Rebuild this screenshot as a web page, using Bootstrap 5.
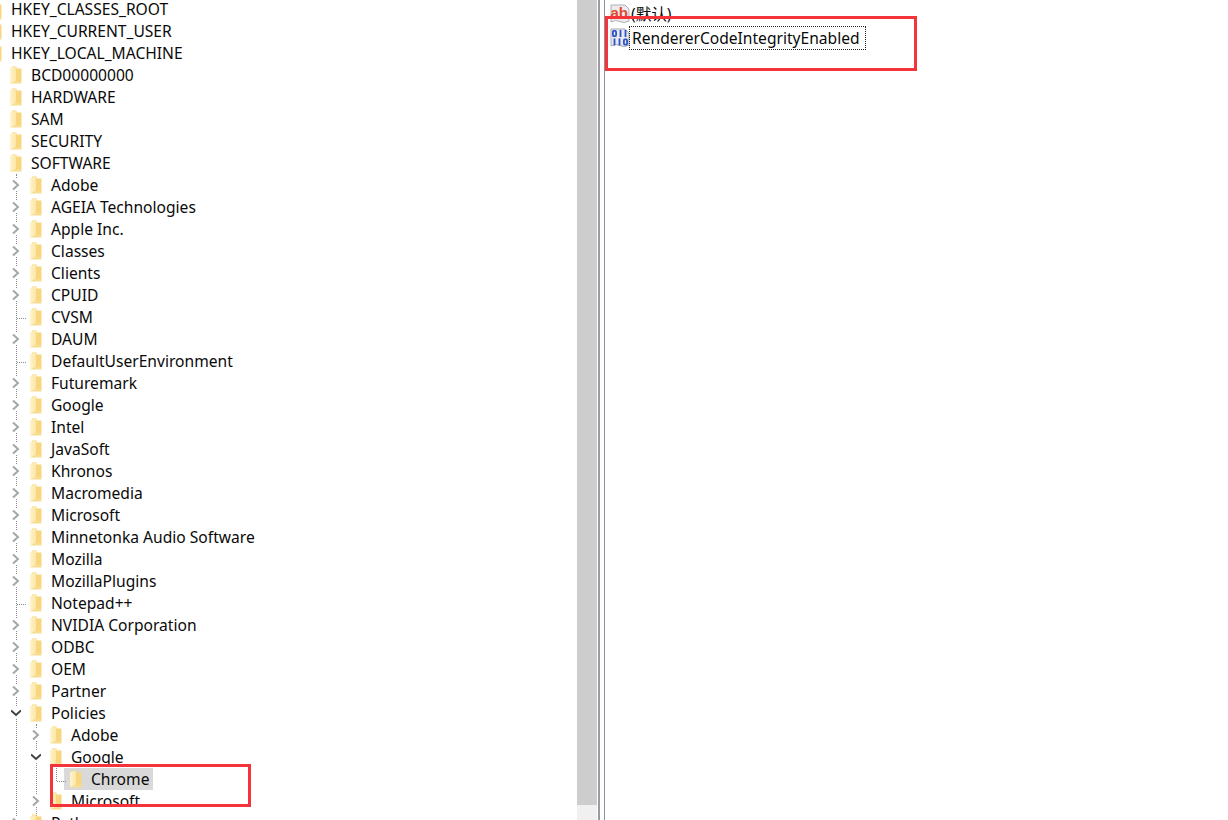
<!DOCTYPE html>
<html lang="zh">
<head>
<meta charset="utf-8">
<title>Registry</title>
<link href="https://cdn.jsdelivr.net/npm/bootstrap@5.3.0/dist/css/bootstrap.min.css" rel="stylesheet">
<style>
html,body{height:820px;overflow:hidden;background:#fff;}
body{font-family:"Noto Sans","Noto Sans CJK SC",sans-serif;font-size:15.6px;color:#0a0a0a;}
.shell{width:1228px;height:820px;position:relative;overflow:hidden;}
.tree-pane{width:577px;height:820px;position:relative;overflow:hidden;flex:none;}
.trow{height:22px;line-height:22px;white-space:nowrap;}
.trow-top{height:20px;line-height:18px;}
.lv0{margin-left:-31px;}
.lv1{margin-left:-11px;}
.lv2{margin-left:9px;}
.lv3{margin-left:29px;}
.lv4{margin-left:49px;}
.twist{width:10px;height:22px;margin-left:2px;margin-right:8px;flex:none;position:relative;z-index:1;}
.twist svg{display:block;margin-top:5px;background:#fff;}
.nub{width:20px;flex:none;}
.fold{width:13px;height:18px;flex:none;margin-right:9px;margin-top:2px;position:relative;z-index:1;}
.lbl{display:inline-block;}
.sel-box{background:#d9d9d9;margin-left:-5px;padding-left:5px;padding-right:4px;}
.vline{position:absolute;border-left:1px dotted #8a8a8a;width:0;}
.hline{position:absolute;border-top:1px dotted #8a8a8a;height:0;}
.sbar{width:20px;height:820px;background:#f0f0f0;flex:none;}
.sthumb{height:805px;background:#cdcdcd;}
.gapa{width:1px;flex:none;}
.split1{width:2px;height:820px;background:#9a9aa2;flex:none;}
.gapb{width:4px;flex:none;}
.split2{width:1px;height:820px;background:#8f8f96;flex:none;}
.val-pane{padding:2px 0 0 5px;}
.vrow{height:24px;line-height:24px;white-space:nowrap;}
.vicon{width:20px;height:20px;flex:none;margin-right:1px;}
.focusbox{outline:1px dotted #222;padding:0 5px 0 2px;height:22px;line-height:22px;margin-left:-1px;}
.redbox{position:absolute;border:3px solid #f5333a;z-index:3;}
.red-a{left:50px;top:764px;width:201px;height:43px;}
.red-b{left:605px;top:16px;width:312px;height:55px;}
</style>
</head>
<body>
<svg width="0" height="0" class="position-absolute">
<defs>
<linearGradient id="fg" x1="0" y1="0" x2="1" y2="0"><stop offset="0" stop-color="#fff4cc"/><stop offset="1" stop-color="#fce6a6"/></linearGradient>
<symbol id="folder" viewBox="0 0 13 18">
<path d="M3 0.500H7.500V2.500H12.500V15H3Z" fill="#f8d67e"/>
<path d="M1 2L7 0.500V14.500L1 17.500Z" fill="url(#fg)"/>
<path d="M7 14.500L1 17.500H12.500V15H7Z" fill="#f8dc90"/>
</symbol>
<symbol id="cr" viewBox="0 0 10 12"><path d="M2 1.500L7 6L2 10.500" fill="none" stroke="#a6a6a6" stroke-width="2"/></symbol>
<symbol id="cd" viewBox="0 0 10 12"><path d="M0 3.500L5 8L10 3.500" fill="none" stroke="#404040" stroke-width="2"/></symbol>
</defs>
</svg>
<div class="shell d-flex">
  <div class="tree-pane">
    <div class="vline" style="left:16px;top:174px;height:650px"></div>
    <div class="vline" style="left:36px;top:724px;height:100px"></div>
    <div class="hline" style="left:17px;top:318px;width:9px"></div>
    <div class="hline" style="left:17px;top:362px;width:9px"></div>
    <div class="hline" style="left:17px;top:604px;width:9px"></div>
    <div class="vline" style="left:56px;top:768px;height:13px"></div>
    <div class="hline" style="left:57px;top:781px;width:9px"></div>
    <div>
      <div class="trow trow-top lv0 d-flex"><span class="nub"></span><svg class="fold"><use href="#folder"/></svg><span class="lbl">HKEY_CLASSES_ROOT</span></div>
      <div class="trow lv0 d-flex"><span class="nub"></span><svg class="fold"><use href="#folder"/></svg><span class="lbl">HKEY_CURRENT_USER</span></div>
      <div class="trow lv0 d-flex"><span class="nub"></span><svg class="fold"><use href="#folder"/></svg><span class="lbl">HKEY_LOCAL_MACHINE</span></div>
      <div class="trow lv1 d-flex"><span class="nub"></span><svg class="fold"><use href="#folder"/></svg><span class="lbl">BCD00000000</span></div>
      <div class="trow lv1 d-flex"><span class="nub"></span><svg class="fold"><use href="#folder"/></svg><span class="lbl">HARDWARE</span></div>
      <div class="trow lv1 d-flex"><span class="nub"></span><svg class="fold"><use href="#folder"/></svg><span class="lbl">SAM</span></div>
      <div class="trow lv1 d-flex"><span class="nub"></span><svg class="fold"><use href="#folder"/></svg><span class="lbl">SECURITY</span></div>
      <div class="trow lv1 d-flex"><span class="nub"></span><svg class="fold"><use href="#folder"/></svg><span class="lbl">SOFTWARE</span></div>
      <div class="trow lv2 d-flex"><span class="twist"><svg width="10" height="12"><use href="#cr"/></svg></span><svg class="fold"><use href="#folder"/></svg><span class="lbl">Adobe</span></div>
      <div class="trow lv2 d-flex"><span class="twist"><svg width="10" height="12"><use href="#cr"/></svg></span><svg class="fold"><use href="#folder"/></svg><span class="lbl">AGEIA Technologies</span></div>
      <div class="trow lv2 d-flex"><span class="twist"><svg width="10" height="12"><use href="#cr"/></svg></span><svg class="fold"><use href="#folder"/></svg><span class="lbl">Apple Inc.</span></div>
      <div class="trow lv2 d-flex"><span class="twist"><svg width="10" height="12"><use href="#cr"/></svg></span><svg class="fold"><use href="#folder"/></svg><span class="lbl">Classes</span></div>
      <div class="trow lv2 d-flex"><span class="twist"><svg width="10" height="12"><use href="#cr"/></svg></span><svg class="fold"><use href="#folder"/></svg><span class="lbl">Clients</span></div>
      <div class="trow lv2 d-flex"><span class="twist"><svg width="10" height="12"><use href="#cr"/></svg></span><svg class="fold"><use href="#folder"/></svg><span class="lbl">CPUID</span></div>
      <div class="trow lv2 d-flex"><span class="nub"></span><svg class="fold"><use href="#folder"/></svg><span class="lbl">CVSM</span></div>
      <div class="trow lv2 d-flex"><span class="twist"><svg width="10" height="12"><use href="#cr"/></svg></span><svg class="fold"><use href="#folder"/></svg><span class="lbl">DAUM</span></div>
      <div class="trow lv2 d-flex"><span class="nub"></span><svg class="fold"><use href="#folder"/></svg><span class="lbl">DefaultUserEnvironment</span></div>
      <div class="trow lv2 d-flex"><span class="twist"><svg width="10" height="12"><use href="#cr"/></svg></span><svg class="fold"><use href="#folder"/></svg><span class="lbl">Futuremark</span></div>
      <div class="trow lv2 d-flex"><span class="twist"><svg width="10" height="12"><use href="#cr"/></svg></span><svg class="fold"><use href="#folder"/></svg><span class="lbl">Google</span></div>
      <div class="trow lv2 d-flex"><span class="twist"><svg width="10" height="12"><use href="#cr"/></svg></span><svg class="fold"><use href="#folder"/></svg><span class="lbl">Intel</span></div>
      <div class="trow lv2 d-flex"><span class="twist"><svg width="10" height="12"><use href="#cr"/></svg></span><svg class="fold"><use href="#folder"/></svg><span class="lbl">JavaSoft</span></div>
      <div class="trow lv2 d-flex"><span class="twist"><svg width="10" height="12"><use href="#cr"/></svg></span><svg class="fold"><use href="#folder"/></svg><span class="lbl">Khronos</span></div>
      <div class="trow lv2 d-flex"><span class="twist"><svg width="10" height="12"><use href="#cr"/></svg></span><svg class="fold"><use href="#folder"/></svg><span class="lbl">Macromedia</span></div>
      <div class="trow lv2 d-flex"><span class="twist"><svg width="10" height="12"><use href="#cr"/></svg></span><svg class="fold"><use href="#folder"/></svg><span class="lbl">Microsoft</span></div>
      <div class="trow lv2 d-flex"><span class="twist"><svg width="10" height="12"><use href="#cr"/></svg></span><svg class="fold"><use href="#folder"/></svg><span class="lbl">Minnetonka Audio Software</span></div>
      <div class="trow lv2 d-flex"><span class="twist"><svg width="10" height="12"><use href="#cr"/></svg></span><svg class="fold"><use href="#folder"/></svg><span class="lbl">Mozilla</span></div>
      <div class="trow lv2 d-flex"><span class="twist"><svg width="10" height="12"><use href="#cr"/></svg></span><svg class="fold"><use href="#folder"/></svg><span class="lbl">MozillaPlugins</span></div>
      <div class="trow lv2 d-flex"><span class="nub"></span><svg class="fold"><use href="#folder"/></svg><span class="lbl">Notepad++</span></div>
      <div class="trow lv2 d-flex"><span class="twist"><svg width="10" height="12"><use href="#cr"/></svg></span><svg class="fold"><use href="#folder"/></svg><span class="lbl">NVIDIA Corporation</span></div>
      <div class="trow lv2 d-flex"><span class="twist"><svg width="10" height="12"><use href="#cr"/></svg></span><svg class="fold"><use href="#folder"/></svg><span class="lbl">ODBC</span></div>
      <div class="trow lv2 d-flex"><span class="twist"><svg width="10" height="12"><use href="#cr"/></svg></span><svg class="fold"><use href="#folder"/></svg><span class="lbl">OEM</span></div>
      <div class="trow lv2 d-flex"><span class="twist"><svg width="10" height="12"><use href="#cr"/></svg></span><svg class="fold"><use href="#folder"/></svg><span class="lbl">Partner</span></div>
      <div class="trow lv2 d-flex"><span class="twist"><svg width="10" height="12"><use href="#cd"/></svg></span><svg class="fold"><use href="#folder"/></svg><span class="lbl">Policies</span></div>
      <div class="trow lv3 d-flex"><span class="twist"><svg width="10" height="12"><use href="#cr"/></svg></span><svg class="fold"><use href="#folder"/></svg><span class="lbl">Adobe</span></div>
      <div class="trow lv3 d-flex"><span class="twist"><svg width="10" height="12"><use href="#cd"/></svg></span><svg class="fold"><use href="#folder"/></svg><span class="lbl">Google</span></div>
      <div class="trow lv4 d-flex"><span class="nub"></span><span class="sel-box d-flex"><svg class="fold"><use href="#folder"/></svg><span class="lbl">Chrome</span></span></div>
      <div class="trow lv3 d-flex"><span class="twist"><svg width="10" height="12"><use href="#cr"/></svg></span><svg class="fold"><use href="#folder"/></svg><span class="lbl">Microsoft</span></div>
      <div class="trow lv2 d-flex"><span class="twist"><svg width="10" height="12"><use href="#cr"/></svg></span><svg class="fold"><use href="#folder"/></svg><span class="lbl">Path</span></div>
    </div>
  </div>
  <div class="sbar"><div class="sthumb"></div></div>
  <div class="gapa"></div>
  <div class="split1"></div>
  <div class="gapb"></div>
  <div class="split2"></div>
  <div class="val-pane flex-grow-1">
    <div class="vrow d-flex align-items-center">
      <svg class="vicon" viewBox="0 0 20 20"><path d="M1 1H15L19 5V17Q14 20 10 17.500T1 18Z" fill="#ececee" stroke="#b0b0b4"/><text x="0.500" y="14" font-family="Liberation Sans" font-weight="700" font-size="15" fill="#e2492f">ab</text></svg>
      <span>(默认)</span>
    </div>
    <div class="vrow d-flex align-items-center">
      <svg class="vicon" viewBox="0 0 20 20" aria-hidden="true"><path d="M1 1H15L19 5V17Q14 20 10 17.500T1 18Z" fill="#e8e8ee" stroke="#a9a9b5"/>
        <g fill="none" stroke="#2a55c8" stroke-width="1.800"><rect x="2.900" y="2.900" width="3.200" height="5.200" rx="1"/><path d="M10.500 2V9M15.500 2V9"/><path d="M4.500 10.500V17.500M9.500 10.500V17.500"/><rect x="13.900" y="11.400" width="3.200" height="5.200" rx="1"/></g></svg>
      <span class="focusbox">RendererCodeIntegrityEnabled</span>
    </div>
  </div>
  <div class="redbox red-a"></div>
  <div class="redbox red-b"></div>
</div>
<script src="https://cdn.jsdelivr.net/npm/bootstrap@5.3.0/dist/js/bootstrap.bundle.min.js"></script>
</body>
</html>
